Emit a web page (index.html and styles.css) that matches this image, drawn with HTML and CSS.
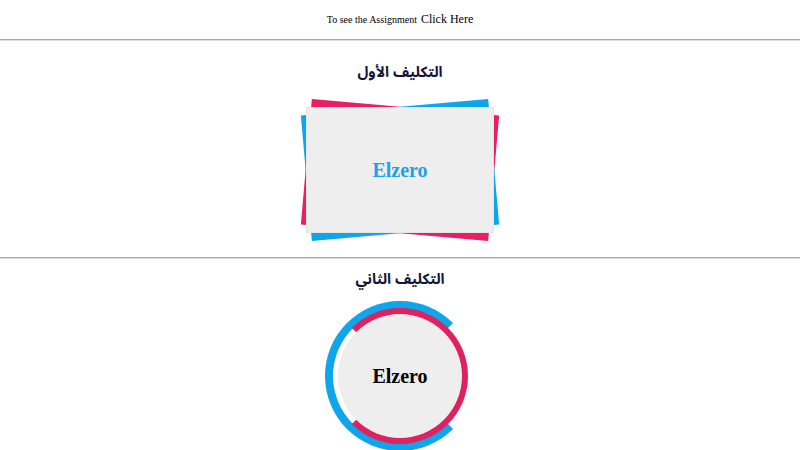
FILE: index.html
```html
<!DOCTYPE html>
<html lang="en">
<head>
<meta charset="utf-8">
<title>Elzero Assignments</title>
<link rel="stylesheet" href="styles.css">
</head>
<body>
  <header class="top">
    <span class="lead">To see the Assignment</span>
    <span class="link">Click Here</span>
  </header>
  <hr class="rule">
  <section class="task task-one">
    <h2 class="task-title" dir="rtl">التكليف الأول</h2>
    <div class="stack">
      <div class="card">Elzero</div>
    </div>
  </section>
  <hr class="rule">
  <section class="task task-two">
    <h2 class="task-title" dir="rtl">التكليف الثاني</h2>
    <div class="stack">
      <div class="circle">Elzero</div>
    </div>
  </section>
</body>
</html>
```
FILE: styles.css
```css
html, body {
  margin: 0;
  padding: 0;
  background: #fff;
  overflow: hidden;
}
body {
  width: 800px;
  height: 450px;
  font-family: "Liberation Serif", "Times New Roman", serif;
  color: #000;
}
.top {
  height: 39px;
  display: flex;
  align-items: center;
  justify-content: center;
  gap: 4px;
}
.lead {
  font-size: 10px;
}
.link {
  font-size: 12px;
}
.rule {
  margin: 0;
  height: 0;
  border: 0;
  border-top: 1px solid #a8a8a8;
  border-bottom: 1px solid #dcdcdc;
}
.task {
  display: flex;
  flex-direction: column;
  align-items: center;
}
.task-one {
  height: 216px;
}
.task-two {
  height: 191px;
}
.task-title {
  margin: 0;
  font-family: "Noto Sans Arabic", "Noto Naskh Arabic", "Noto Sans", sans-serif;
  font-size: 14.8px;
  line-height: 24px;
  font-weight: 700;
  color: #12173a;
}
.task-one .task-title {
  margin-top: 20px;
}
.task-two .task-title {
  margin-top: 9px;
}
.stack {
  position: relative;
  isolation: isolate;
}
.task-one .stack {
  margin-top: 22px;
}
.task-two .stack {
  margin-top: 16px;
}
.card {
  position: relative;
  width: 186px;
  height: 124px;
  background: #eeeeee;
  border: 1px solid #e4e4e4;
  display: flex;
  align-items: center;
  justify-content: center;
  font-size: 20px;
  font-weight: 700;
  color: #1aa3e8;
}
.card::before,
.card::after {
  content: "";
  position: absolute;
  inset: -1px;
  z-index: -1;
}
.card::before {
  background: #e91e63;
  transform: rotate(5deg);
}
.card::after {
  background: #0ea5ea;
  transform: rotate(-5deg);
}
.circle {
  position: relative;
  width: 124px;
  height: 124px;
  border: 6px solid #e0215f;
  border-left-color: transparent;
  border-radius: 50%;
  background: #eeeeee;
  background-clip: padding-box;
  display: flex;
  align-items: center;
  justify-content: center;
  font-size: 20px;
  font-weight: 700;
  color: #000;
}
.circle::before {
  content: "";
  position: absolute;
  inset: -13px;
  border: 8px solid #0ea5ea;
  border-right-color: transparent;
  border-radius: 50%;
  z-index: -1;
}
```
